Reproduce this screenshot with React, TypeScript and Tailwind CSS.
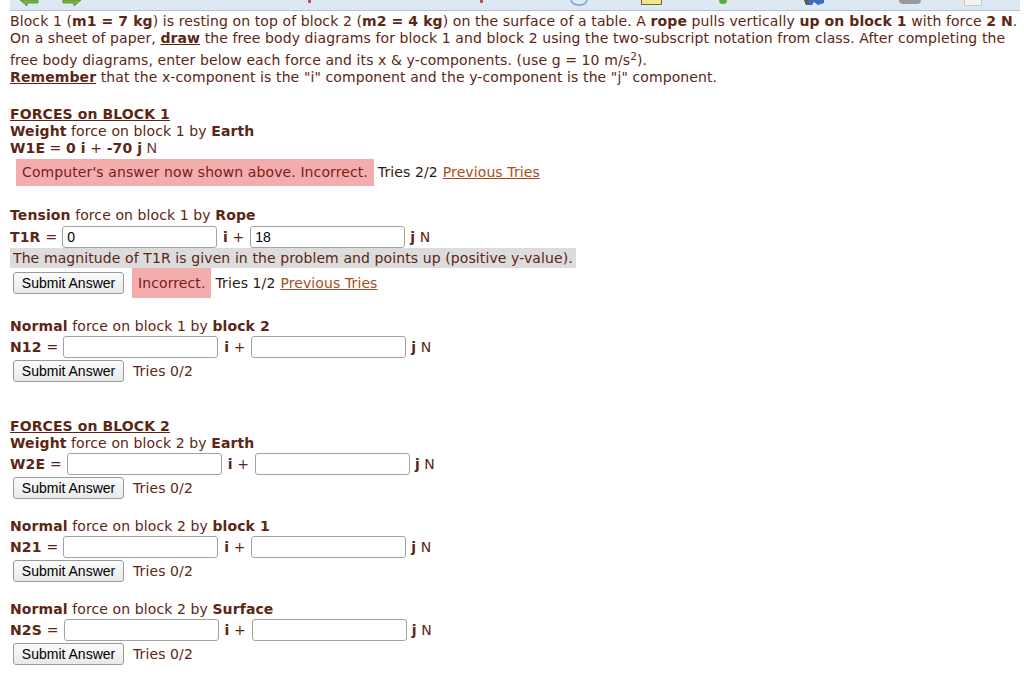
import React from 'react'

const T = 'text-[#5c2614]'

function ToolbarStrip() {
  return (
    <div className="ml-[10px] mr-[4px] h-[11px] overflow-hidden border-b border-[#b9c3cf] bg-[#dde8f5] flex items-start">
      <svg className="ml-[8px] shrink-0" width="22" height="7" viewBox="0 0 22 7">
        <path d="M2 0 L9 6 L9 3 L20 3 L20 0 Z" fill="#7cb342" stroke="#4f8a23" strokeWidth="0.8" />
      </svg>
      <svg className="ml-[22px] shrink-0" width="21" height="7" viewBox="0 0 21 7">
        <path d="M19 0 L12 6 L12 3 L1 3 L1 0 Z" fill="#7cb342" stroke="#4f8a23" strokeWidth="0.8" />
      </svg>
      <div className="ml-[225px] h-[3px] w-[3px] shrink-0 bg-[#c05050]" />
      <div className="ml-[169px] h-[3px] w-[3px] shrink-0 bg-[#c05050]" />
      <svg className="ml-[86px] shrink-0" width="20" height="6" viewBox="0 0 20 6">
        <path d="M2 0 A8 5 0 0 0 18 0" fill="none" stroke="#7a9fd6" strokeWidth="1.5" />
      </svg>
      <div className="ml-[52px] h-[5px] w-[21px] shrink-0 rounded-b-[1px] border border-t-0 border-[#6d6a40] bg-[#f5e58a]" />
      <div className="ml-[50px] h-[5px] w-[22px] shrink-0 flex justify-center rounded-b-[2px] bg-[#e7e7e7]">
        <div className="h-[4px] w-[8px] rounded-b-full bg-[#4caf3c]" />
      </div>
      <svg className="ml-[68px] shrink-0" width="24" height="6" viewBox="0 0 24 6">
        <path d="M2 0 L4 5 L10 5 L12 2 L16 5 L22 3 L22 0 Z" fill="#3d6fc0" />
        <path d="M2 0 L4 5 L7 5 L6 0 Z" fill="#6a5a3a" />
      </svg>
      <div className="ml-[73px] h-[4px] w-[22px] shrink-0 rounded-b-[4px] bg-[#9a9a9a]" />
      <div className="ml-[43px] h-[6px] w-[18px] shrink-0 border border-t-0 border-[#c9c9c9] bg-[#f4f4f4]" />
    </div>
  )
}

function Field({ label, i = '', j = '' }: { label: string; i?: string; j?: string }) {
  return (
    <div className="flex h-[22px] items-center whitespace-nowrap">
      <span className="font-bold">{label}</span>
      <span className="ml-[5px]">=</span>
      <input
        defaultValue={i}
        className="ml-[5px] h-[22px] w-[155px] rounded-[3px] border border-[#a3a3a3] bg-white px-[4px] font-['Liberation_Sans',Arial,sans-serif] text-[14px] tracking-normal text-black outline-none"
      />
      <span className="w-[33px] text-center">
        <b>i</b> +
      </span>
      <input
        defaultValue={j}
        className="h-[22px] w-[155px] rounded-[3px] border border-[#a3a3a3] bg-white px-[4px] font-['Liberation_Sans',Arial,sans-serif] text-[14px] tracking-normal text-black outline-none"
      />
      <span className="ml-[5px]">
        <b>j</b> N
      </span>
    </div>
  )
}

function SubmitButton() {
  return (
    <button className="ml-[3px] h-[22px] w-[111px] shrink-0 rounded-[3px] border border-[#9a9a9a] bg-gradient-to-b from-[#fbfbfb] to-[#e9e9e9] font-['Liberation_Sans',Arial,sans-serif] text-[14px] tracking-normal text-black">
      Submit Answer
    </button>
  )
}

function Fresh({ force, on, by, label }: { force: string; on: string; by: string; label: string }) {
  return (
    <div>
      <div>
        <b>{force}</b> force on {on} by <b>{by}</b>
      </div>
      <div className="mt-[1px]">
        <Field label={label} />
      </div>
      <div className="mt-[2px] flex h-[22px] items-center">
        <SubmitButton />
        <span className="ml-[9px]">Tries 0/2</span>
      </div>
    </div>
  )
}

export default function App() {
  return (
    <div
      className={`h-[693px] w-[1024px] overflow-hidden bg-white font-['DejaVu_Sans',Verdana,sans-serif] text-[14px] leading-[17px] tracking-[0.1px] ${T}`}
    >
      <ToolbarStrip />

      <div className="mt-[2px] px-[10px] whitespace-nowrap">
        <div>
          Block 1 (<b>m1 = 7 kg</b>) is resting on top of block 2 (<b>m2 = 4 kg</b>) on the surface of a table. A{' '}
          <b>rope</b> pulls vertically <b>up on block 1</b> with force <b>2 N</b>.
        </div>
        <div>
          On a sheet of paper, <b className="underline">draw</b> the free body diagrams for block 1 and block 2 using the
          two-subscript notation from class. After completing the
        </div>
        <div className="pt-[5px]">
          free body diagrams, enter below each force and its x &amp; y-components. (use g = 10 m/s<sup>2</sup>).
        </div>
        <div>
          <b className="underline">Remember</b> that the x-component is the "i" component and the y-component is the "j"
          component.
        </div>
      </div>

      <div className="mt-[20px] px-[10px] whitespace-nowrap">
        <div className="font-bold underline">FORCES on BLOCK 1</div>
        <div>
          <b>Weight</b> force on block 1 by <b>Earth</b>
        </div>
        <div>
          <b>W1E</b> = <b>0 i</b> + <b>-70 j</b> <span className="font-['Liberation_Sans',Arial,sans-serif]">N</span>
        </div>
        <div className="mt-[2px] flex items-center">
          <div className="ml-[6px] h-[27px] bg-[#f4adad] px-[6px] py-[5px] text-[#7b1c1c]">
            Computer's answer now shown above. Incorrect.
          </div>
          <span className="ml-[4px] text-[#2a1a12]">Tries 2/2</span>
          <a href="#" className="ml-[5px] text-[#a34f22] underline">
            Previous Tries
          </a>
        </div>

        <div className="mt-[21px]">
          <b>Tension</b> force on block 1 by <b>Rope</b>
        </div>
        <div className="mt-[2px]">
          <Field label="T1R" i="0" j="18" />
        </div>
        <div className="h-[20px] w-[566px] bg-[#dcdcdc] pl-[3px] leading-[20px]">
          The magnitude of T1R is given in the problem and points up (positive y-value).
        </div>
        <div className="flex h-[30px] items-center">
          <SubmitButton />
          <div className="ml-[8px] h-[30px] bg-[#f4adad] px-[6px] leading-[30px] text-[#7b1c1c]">Incorrect.</div>
          <span className="ml-[4px] text-[#2a1a12]">Tries 1/2</span>
          <a href="#" className="ml-[5px] text-[#a34f22] underline">
            Previous Tries
          </a>
        </div>

        <div className="mt-[20px]">
          <Fresh force="Normal" on="block 1" by="block 2" label="N12" />
        </div>

        <div className="mt-[36px] font-bold underline">FORCES on BLOCK 2</div>
        <Fresh force="Weight" on="block 2" by="Earth" label="W2E" />

        <div className="mt-[19px]">
          <Fresh force="Normal" on="block 2" by="block 1" label="N21" />
        </div>
        <div className="mt-[19px]">
          <Fresh force="Normal" on="block 2" by="Surface" label="N2S" />
        </div>
      </div>
    </div>
  )
}
